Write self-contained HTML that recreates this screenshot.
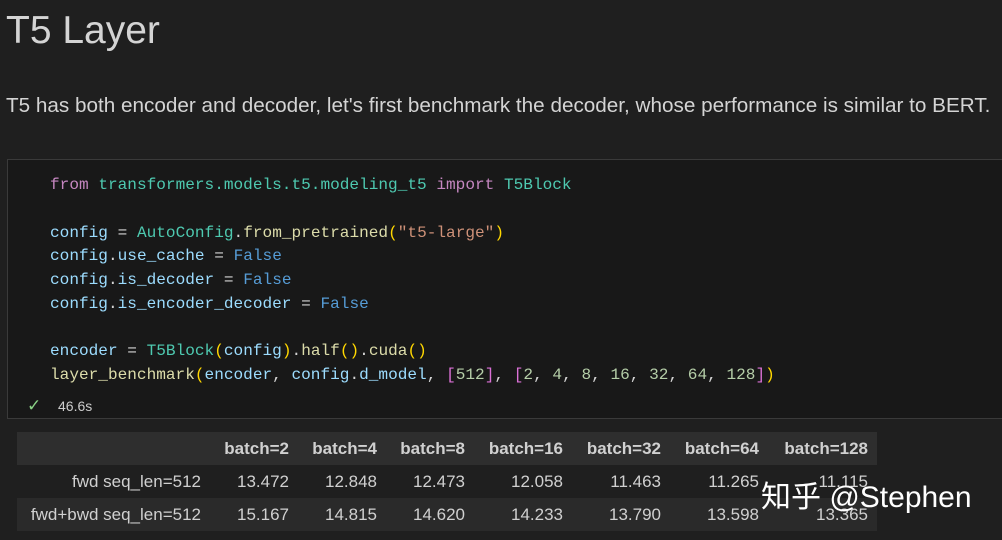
<!DOCTYPE html>
<html><head><style>
body{margin:0;width:1002px;height:540px;background:#1f1f1f;overflow:hidden;font-family:"Liberation Sans",sans-serif;color:#cccccc;position:relative}
.h1{position:absolute;left:6px;top:9px;font-size:39px;color:#d4d4d4}
.p{position:absolute;left:6px;top:94px;font-size:20.7px;white-space:nowrap;color:#d4d4d4}
.cell{position:absolute;left:7px;top:159px;width:1000px;height:260px;border:1px solid #3a3a3a;background:#181818;box-sizing:border-box}
.code{position:absolute;left:50px;top:174px;font-family:"Liberation Mono",monospace;font-size:16.1px;line-height:23.75px;white-space:pre;color:#9cdcfe}
.k{color:#c586c0}.t{color:#4ec9b0}.f{color:#dcdcaa}.s{color:#ce9178}.b{color:#569cd6}.w{color:#d4d4d4}.y{color:#ffd700}.m{color:#da70d6}.n{color:#b5cea8}
.chk{position:absolute;left:27px;top:396px;color:#89d185;font-size:17px}
.tm{position:absolute;left:58px;top:398px;font-size:14px;color:#ccc}
table{position:absolute;left:17px;top:432px;border-collapse:collapse;font-size:17px;color:#d0d0d0;white-space:nowrap}
td,th{text-align:right;height:33px;padding:0 9px 0 9px}
th{font-weight:bold}
tr.h{background:#2e2e2e}tr.r2{background:#2a2a2a}
.wm{position:absolute;left:761px;top:472px;font-size:30px;color:#fff;font-family:"Liberation Sans","Noto Sans CJK SC",sans-serif}
</style></head><body>
<div class="h1">T5 Layer</div>
<div class="p">T5 has both encoder and decoder, let's first benchmark the decoder, whose performance is similar to BERT.</div>
<div class="cell"></div>
<div class="code"><span class="k">from</span> <span class="t">transformers.models.t5.modeling_t5</span> <span class="k">import</span> <span class="t">T5Block</span>

config <span class="w">=</span> <span class="t">AutoConfig</span><span class="w">.</span><span class="f">from_pretrained</span><span class="y">(</span><span class="s">"t5-large"</span><span class="y">)</span>
config<span class="w">.</span>use_cache <span class="w">=</span> <span class="b">False</span>
config<span class="w">.</span>is_decoder <span class="w">=</span> <span class="b">False</span>
config<span class="w">.</span>is_encoder_decoder <span class="w">=</span> <span class="b">False</span>

encoder <span class="w">=</span> <span class="t">T5Block</span><span class="y">(</span>config<span class="y">)</span><span class="w">.</span><span class="f">half</span><span class="y">()</span><span class="w">.</span><span class="f">cuda</span><span class="y">()</span>
<span class="f">layer_benchmark</span><span class="y">(</span>encoder<span class="w">,</span> config<span class="w">.</span>d_model<span class="w">,</span> <span class="m">[</span><span class="n">512</span><span class="m">]</span><span class="w">,</span> <span class="m">[</span><span class="n">2</span><span class="w">,</span> <span class="n">4</span><span class="w">,</span> <span class="n">8</span><span class="w">,</span> <span class="n">16</span><span class="w">,</span> <span class="n">32</span><span class="w">,</span> <span class="n">64</span><span class="w">,</span> <span class="n">128</span><span class="m">]</span><span class="y">)</span></div>
<div class="chk">✓</div><div class="tm">46.6s</div>
<table>
<tr class="h"><th style="width:175px"></th><th style="width:70px">batch=2</th><th style="width:70px">batch=4</th><th style="width:70px">batch=8</th><th style="width:80px">batch=16</th><th style="width:80px">batch=32</th><th style="width:80px">batch=64</th><th style="width:91px">batch=128</th></tr>
<tr><td>fwd seq_len=512</td><td>13.472</td><td>12.848</td><td>12.473</td><td>12.058</td><td>11.463</td><td>11.265</td><td>11.115</td></tr>
<tr class="r2"><td>fwd+bwd seq_len=512</td><td>15.167</td><td>14.815</td><td>14.620</td><td>14.233</td><td>13.790</td><td>13.598</td><td>13.365</td></tr>
</table>
<div class="wm">知乎 @Stephen</div>
</body></html>
